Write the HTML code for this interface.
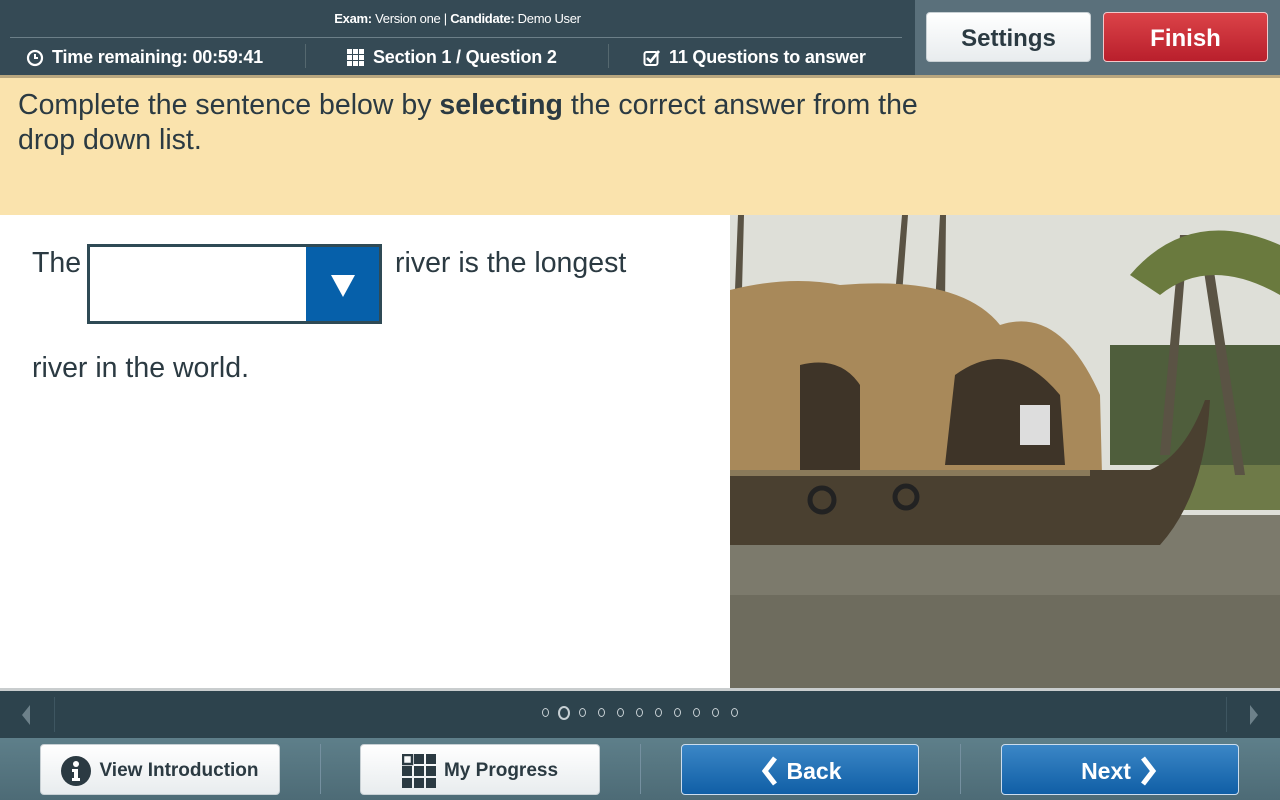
<!DOCTYPE html>
<html><head><meta charset="utf-8"><style>
*{margin:0;padding:0;box-sizing:border-box}
body{width:1280px;height:800px;overflow:hidden;font-family:"Liberation Sans",sans-serif;background:#fff;position:relative}
.hdr{position:absolute;left:0;top:0;width:915px;height:75px;background:#354a55}
.hdr2{position:absolute;left:915px;top:0;width:365px;height:75px;background:#5a707b}
.meta{position:absolute;top:11px;left:0;width:915px;text-align:center;color:#fff;font-size:13px;letter-spacing:-0.3px}
.line{position:absolute;left:10px;top:37px;width:892px;height:1px;background:#6c7f88}
.stat{position:absolute;top:47px;color:#fff;font-weight:bold;font-size:18px;letter-spacing:-0.2px;display:flex;align-items:center;gap:8px}
.vsep{position:absolute;top:44px;width:1px;height:24px;background:#55686f}
.btn{position:absolute;border-radius:4px;display:flex;align-items:center;justify-content:center;font-weight:bold;font-size:22px;gap:8px}
.instr{position:absolute;left:0;top:75px;width:1280px;height:140px;background:#fae3ad;border-top:3px solid #b8a67e}
.instr p{position:absolute;left:18px;top:10px;font-size:28.5px;line-height:35px;color:#2b3a42;width:940px}
.q{position:absolute;font-size:28.5px;color:#2b3a42}
.nav{position:absolute;left:0;top:688px;width:1280px;height:50px;background:#2d434d;border-top:3px solid #c9cdce}
.foot{position:absolute;left:0;top:738px;width:1280px;height:62px;background:linear-gradient(#5e7f8a,#4d6b76)}
.wbtn{background:linear-gradient(#fff,#e8ecee);color:#2b3a42;font-size:19px;border:1px solid #c8d0d4}
.bbtn{background:linear-gradient(#3b86c6,#105fa6);color:#fff;font-size:23px;border:1px solid #cde}
.dot{display:inline-block;width:7px;height:9px;border:1.5px solid #c6cfd3;border-radius:50%;margin:0 6px}
</style></head><body>
<div class="hdr"></div><div class="hdr2"></div>
<div class="meta"><b>Exam:</b> Version one | <b>Candidate:</b> Demo User</div>
<div class="line"></div>
<div class="stat" style="left:26px"><svg width="18" height="18" viewBox="0 0 18 18"><circle cx="9" cy="9" r="7" fill="none" stroke="#fff" stroke-width="2.2"/><path d="M9 5v4h3" stroke="#fff" stroke-width="2" fill="none"/></svg>Time remaining: 00:59:41</div>
<div class="vsep" style="left:305px"></div>
<div class="stat" style="left:347px"><svg width="18" height="18" viewBox="0 0 18 18" fill="#fff"><rect x="0" y="0" width="5" height="5"/><rect x="6" y="0" width="5" height="5"/><rect x="12" y="0" width="5" height="5"/><rect x="0" y="6" width="5" height="5"/><rect x="6" y="6" width="5" height="5"/><rect x="12" y="6" width="5" height="5"/><rect x="0" y="12" width="5" height="5"/><rect x="6" y="12" width="5" height="5"/><rect x="12" y="12" width="5" height="5"/></svg>Section 1 / Question 2</div>
<div class="vsep" style="left:608px"></div>
<div class="stat" style="left:643px"><svg width="18" height="18" viewBox="0 0 18 18"><rect x="1.5" y="3" width="13" height="13" rx="2" fill="none" stroke="#fff" stroke-width="2"/><path d="M4 9l3.5 3.5L16 2" stroke="#fff" stroke-width="2.6" fill="none"/></svg>11 Questions to answer</div>
<div class="btn wbtn" style="left:926px;top:12px;width:165px;height:50px;font-size:24px;padding-top:4px">Settings</div>
<div class="btn" style="left:1103px;top:12px;width:165px;height:50px;font-size:24px;padding-top:4px;color:#fff;background:linear-gradient(#db4348,#b91f2c);border:1px solid #f3c7c9">Finish</div>
<div class="instr"><p>Complete the sentence below by <b>selecting</b> the correct answer from the drop down list.</p></div>
<div class="q" style="left:32px;top:247px">The</div>
<div style="position:absolute;left:87px;top:244px;width:295px;height:80px;border:3px solid #2f4a55;background:#fff"><div style="position:absolute;right:0;top:0;width:73px;height:74px;background:#0660aa"><svg width="73" height="74"><path d="M25 28h24l-12 22z" fill="#fff"/></svg></div></div>
<div class="q" style="left:395px;top:247px">river is the longest</div>
<div class="q" style="left:32px;top:352px">river in the world.</div>
<svg style="position:absolute;left:730px;top:215px" width="550" height="473" viewBox="0 0 550 473">
<rect width="550" height="473" fill="#dedfd8"/>
<rect y="300" width="550" height="173" fill="#7c7a6c"/>
<rect y="380" width="550" height="93" fill="#6e6c5e"/>
<rect x="380" y="130" width="170" height="120" fill="#4f5e3c"/>
<rect x="450" y="250" width="100" height="45" fill="#6e7a48"/>
<path d="M430 240L450 20L458 20L440 240z M505 260L470 30L480 30L515 260z M165 80L172 0L178 0L172 80z M205 90L210 0L216 0L215 90z M5 75L8 0L14 0L12 75z" fill="#5a5344"/>
<path d="M400 60Q460 -10 550 30L550 80Q480 40 430 80z" fill="#6a7a3e"/>
<path d="M0 75Q60 60 110 70Q230 60 270 110Q330 90 370 180L372 260L0 260z" fill="#a8895a"/>
<path d="M70 150Q110 140 130 170L130 255L70 255z M225 160Q280 120 330 180L335 250L215 250z" fill="#3e3428"/>
<path d="M0 255L420 255Q455 240 475 185L480 185Q475 280 430 330L0 330z" fill="#4a4030"/>
<path d="M0 258L360 258" stroke="#8a7a5a" stroke-width="6"/>
<circle cx="92" cy="285" r="12" fill="none" stroke="#222" stroke-width="5"/>
<circle cx="176" cy="282" r="11" fill="none" stroke="#222" stroke-width="5"/>
<path d="M290 190h30v40h-30z" fill="#ddd"/>
</svg>
<div class="nav">
<div style="position:absolute;left:54px;top:6px;width:1px;height:35px;background:#3e5661"></div>
<div style="position:absolute;left:1226px;top:6px;width:1px;height:35px;background:#3e5661"></div>
<svg style="position:absolute;left:20px;top:14px" width="12" height="20"><path d="M10 0L2 10L10 20z" fill="#6d818a"/></svg>
<svg style="position:absolute;left:1248px;top:14px" width="12" height="20"><path d="M2 0L10 10L2 20z" fill="#6d818a"/></svg>
<div style="position:absolute;left:0;width:1280px;top:15px;text-align:center;font-size:0"><span class="dot"></span><span class="dot" style="width:12px;height:14px;border-width:2px;vertical-align:-3px;margin:0 3px"></span><span class="dot"></span><span class="dot"></span><span class="dot"></span><span class="dot"></span><span class="dot"></span><span class="dot"></span><span class="dot"></span><span class="dot"></span><span class="dot"></span></div>
</div>
<div class="foot">
<div style="position:absolute;left:320px;top:6px;width:1px;height:50px;background:#7590a0"></div>
<div style="position:absolute;left:640px;top:6px;width:1px;height:50px;background:#7590a0"></div>
<div style="position:absolute;left:960px;top:6px;width:1px;height:50px;background:#7590a0"></div>
</div>
<div class="btn wbtn" style="left:40px;top:744px;width:240px;height:51px;padding-top:3px"><svg width="30" height="30" viewBox="0 0 30 30"><circle cx="15" cy="15" r="15" fill="#2b3a42"/><circle cx="15" cy="8" r="3" fill="#fff"/><path d="M11 13h6v9h2v3h-8v-3h2v-6h-2z" fill="#fff"/></svg>View Introduction</div>
<div class="btn wbtn" style="left:360px;top:744px;width:240px;height:51px;padding-top:3px"><svg width="34" height="34" viewBox="0 0 34 34" fill="#2b3a42"><rect x="1" y="1" width="9" height="9" fill="none" stroke="#2b3a42" stroke-width="2.5"/><rect x="12" y="0" width="10" height="10"/><rect x="24" y="0" width="10" height="10"/><rect x="0" y="12" width="10" height="10"/><rect x="12" y="12" width="10" height="10"/><rect x="24" y="12" width="10" height="10"/><rect x="0" y="24" width="10" height="10"/><rect x="12" y="24" width="10" height="10"/><rect x="24" y="24" width="10" height="10"/></svg>My Progress</div>
<div class="btn bbtn" style="left:681px;top:744px;width:238px;height:51px;padding-top:3px"><svg width="20" height="30"><path d="M16 2L6 15l10 13" stroke="#fff" stroke-width="5" fill="none"/></svg>Back</div>
<div class="btn bbtn" style="left:1001px;top:744px;width:238px;height:51px;padding-top:3px">Next<svg width="20" height="30"><path d="M4 2l10 13L4 28" stroke="#fff" stroke-width="5" fill="none"/></svg></div>
</body></html>
